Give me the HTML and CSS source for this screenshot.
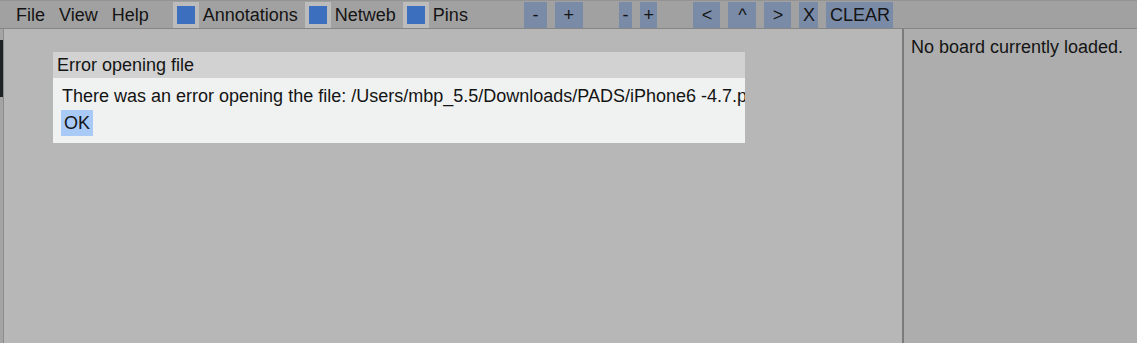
FILE: index.html
```html
<!DOCTYPE html>
<html lang="en">
<head>
    <meta charset="UTF-8">
    <meta name="viewport" content="width=device-width, initial-scale=1.0">
    <title>Board Viewer</title>
    <link rel="stylesheet" href="styles.css">
</head>
<body>
    <div class="toolbar">
        <div class="menu">
            <span class="menu-item">File</span>
            <span class="menu-item">View</span>
            <span class="menu-item">Help</span>
        </div>
        <label class="check"><span class="box"><span class="tick"></span></span>Annotations</label>
        <label class="check"><span class="box"><span class="tick"></span></span>Netweb</label>
        <label class="check"><span class="box"><span class="tick"></span></span>Pins</label>

        <div class="group first">
            <button class="btn w23">-</button>
            <button class="btn w28">+</button>
        </div>
        <div class="group">
            <button class="btn">-</button>
            <button class="btn">+</button>
        </div>
        <div class="group">
            <button class="btn w27">&lt;</button>
            <button class="btn w28">^</button>
            <button class="btn w27">&gt;</button>
            <button class="btn">X</button>
            <button class="btn">CLEAR</button>
        </div>
    </div>

    <div class="main">
        <div class="edge"><div class="edge-dark"></div></div>
        <div class="board">
            <div class="dialog">
                <div class="dialog-title">Error opening file</div>
                <div class="dialog-body">
                    <div class="message">There was an error opening the file: /Users/mbp_5.5/Downloads/PADS/iPhone6 -4.7.pads</div>
                    <button class="ok">OK</button>
                </div>
            </div>
        </div>
        <div class="divider"></div>
        <div class="side">No board currently loaded.</div>
    </div>
</body>
</html>
```

FILE: styles.css
```css
html, body {
    height: 100%;
}
body {
    margin: 0;
    font-family: "Liberation Sans", Arial, sans-serif;
    font-size: 18px;
    color: #141414;
    background: #b7b7b7;
    display: flex;
    flex-direction: column;
    overflow: hidden;
}
.toolbar {
    display: flex;
    align-items: center;
    height: 26px;
    padding-top: 1px;
    border-top: 1px solid #939393;
    border-bottom: 1px solid #858585;
    background: #a1a1a1;
    white-space: nowrap;
}
.menu {
    display: flex;
    gap: 14px;
    padding-left: 16px;
    margin-right: 24px;
}
.menu-item {
    line-height: 27px;
}
.check {
    display: flex;
    align-items: center;
    line-height: 27px;
    margin-right: 7px;
}
.box {
    display: flex;
    align-items: center;
    justify-content: center;
    width: 26px;
    height: 26px;
    margin-right: 4px;
    background: #bcbcbc;
}
.tick {
    width: 18px;
    height: 18px;
    background: #3d6fbf;
}
.group {
    display: flex;
    gap: 8px;
    margin-left: 36px;
}
.group.first {
    margin-left: 49px;
}
button {
    font: inherit;
    color: inherit;
    border: none;
    cursor: pointer;
}
.btn {
    height: 26px;
    padding: 0 3.5px;
    line-height: 27px;
    background: #7a8ba7;
    text-align: center;
}
.w23 { width: 23px; padding: 0; }
.w27 { width: 27px; padding: 0; }
.w28 { width: 28px; padding: 0; }
.main {
    flex: 1;
    display: flex;
}
.edge {
    width: 3px;
    padding-top: 11px;
    border-right: 1px solid #8b8b8b;
    background: #a4a4a4;
}
.edge-dark {
    height: 57px;
    background: #1e2326;
}
.board {
    flex: 1;
    padding: 23px 0 0 49px;
    background: #b7b7b7;
}
.dialog {
    width: 692px;
    overflow: hidden;
    white-space: nowrap;
}
.dialog-title {
    height: 26px;
    line-height: 26px;
    padding-left: 4px;
    background: #d2d2d2;
}
.dialog-body {
    padding: 8px 0 7px 8px;
    background: #f0f2f1;
}
.message {
    line-height: 20px;
    padding-left: 1px;
}
.ok {
    display: block;
    height: 26px;
    margin-top: 4px;
    padding: 0 3px;
    line-height: 26px;
    background: #a9c9f7;
}
.divider {
    width: 2px;
    background: #7b7b7b;
}
.side {
    width: 226px;
    padding: 8px 0 0 7px;
    line-height: 20px;
    background: #adadad;
    white-space: nowrap;
}
```
